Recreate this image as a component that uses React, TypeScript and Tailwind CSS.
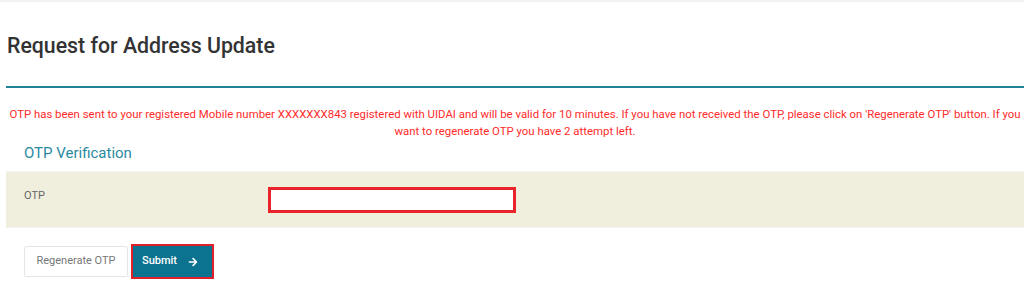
export default function App() {
  return (
    <div className="min-h-[295px] w-[1024px] overflow-hidden border-t-2 border-[#f2f2f2] bg-white font-['Roboto',sans-serif]">
      <div className="pl-[6px]">
        <h1 className="pl-px pt-[29px] text-[21.3px] leading-[30px] font-medium text-[#333]">Request for Address Update</h1>
        <div className="mt-[25px] h-[2px] bg-[#1f8495]" />
        <p className="mt-[18px] text-center text-[11.4px] leading-[17px] text-[#ff2b2b]">
          OTP has been sent to your registered Mobile number XXXXXXX843 registered with UIDAI and will be valid for 10 minutes. If you have not received the OTP, please click on 'Regenerate OTP' button. If you want to regenerate OTP you have 2 attempt left.
        </p>
        <h2 className="mt-[3px] pl-[18px] text-[15px] leading-[20px] text-[#2a8aa0]">OTP Verification</h2>
        <div className="mt-[8px] flex h-[57px] items-center border-y border-[#f4f4ec] bg-[#f0efde]">
          <label className="mb-[6px] w-[262px] pl-[18px] text-[11px] text-[#666]">OTP</label>
          <input className="h-[26px] w-[248px] border-[3px] border-[#e8232c] bg-white outline-none" />
        </div>
        <div className="mt-[16px] flex items-center pl-[18px]">
          <button className="h-[31px] w-[104px] rounded-[2px] border border-[#e6e6e6] bg-white text-[11px] text-[#777]">
            Regenerate OTP
          </button>
          <div className="ml-[3px] border-2 border-[#e0202a] p-0">
            <button className="flex h-[31px] w-[79px] items-center gap-[11px] bg-[#0b7390] pl-[9px] text-[11px] font-medium text-white">
              Submit
              <svg width="10" height="10" viewBox="0 0 448 512" fill="currentColor">
                <path d="M190.5 66.9l22.2-22.2c9.4-9.4 24.6-9.4 33.9 0L441 239c9.4 9.4 9.4 24.6 0 33.9L246.6 467.3c-9.4 9.4-24.6 9.4-33.9 0l-22.2-22.2c-9.5-9.5-9.3-25 .4-34.3L311.4 296H24c-13.3 0-24-10.7-24-24v-32c0-13.3 10.7-24 24-24h287.4L190.9 101.2c-9.8-9.3-10-24.8-.4-34.3z" />
              </svg>
            </button>
          </div>
        </div>
      </div>
    </div>
  );
}
